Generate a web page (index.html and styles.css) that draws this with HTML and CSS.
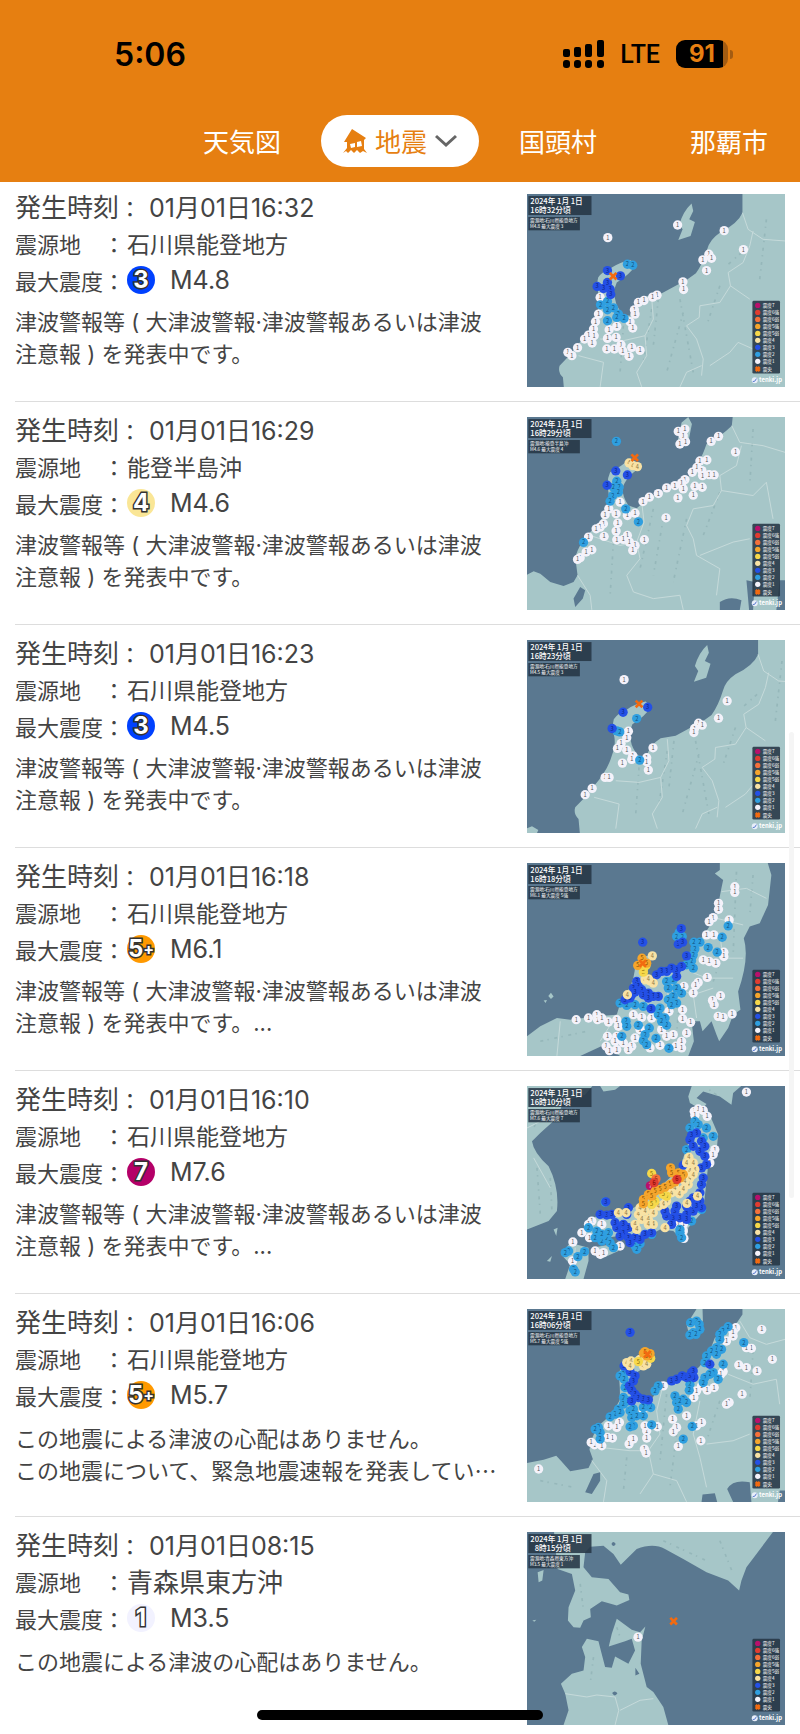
FILE: index.html
```
<!DOCTYPE html>
<html lang="ja">

<head>
	<meta charset="UTF-8">
	<meta name="viewport" content="width=device-width, initial-scale=1.0">
	<title>地震情報</title>
	<link rel="stylesheet" href="styles.css">
</head>

<body>
	<header class="header">
		<div class="status-bar">
			<span class="clock">5:06</span>
			<div class="status-icons">
				<svg class="signal" viewBox="0 0 41 28" aria-hidden="true">
					<rect x="0" y="9" width="7" height="8" rx="2" />
					<rect x="11" y="7" width="7" height="10" rx="2" />
					<rect x="22" y="4" width="7" height="13" rx="2" />
					<rect x="34" y="0" width="7" height="17" rx="2" />
					<rect x="0" y="20" width="7" height="8" rx="3" />
					<rect x="11" y="20" width="7" height="8" rx="3" />
					<rect x="22" y="20" width="7" height="8" rx="3" />
					<rect x="34" y="20" width="7" height="8" rx="3" />
				</svg>
				<span class="network">LTE</span>
				<span class="battery">91</span>
			</div>
		</div>
		<nav class="tabs">
			<a class="tab" href="#chart">天気図</a>
			<button class="tab tab-active" type="button">
				<svg class="house" viewBox="0 0 24 26" aria-hidden="true">
					<path d="M9 1 L23 10 L21 12 L21 21 L24 25 L20 23 L17 25 L14 22 L11 25 L8 22 L5 25 L3 23 L0 25 L4 20 L4 14 L1 14 Z" />
					<path class="pane" d="M7 16 L12 15 L12 19 L8 20 Z M14 14 L18 13 L19 18 L14 19 Z" />
				</svg>
				地震
				<svg class="chevron" viewBox="0 0 22 14" aria-hidden="true">
					<path d="M1 2 L11 11 L21 2" />
				</svg>
			</button>
			<a class="tab" href="#kunigami">国頭村</a>
			<a class="tab tab-far" href="#naha">那覇市</a>
		</nav>
	</header>

	<ul class="quakes">
		<li class="quake">
			<div class="info">
				<dl class="facts">
					<div class="fact time"><dt>発生時刻<span>：</span></dt><dd>01月01日16:32</dd></div>
					<div class="fact"><dt>震源地　：</dt><dd>石川県能登地方</dd></div>
					<div class="fact"><dt>最大震度：</dt><dd class="scale"><span class="badge level3">3</span>M4.8</dd></div>
				</dl>
				<p class="note">津波警報等 ( 大津波警報·津波警報あるいは津波注意報 ) を発表中です。</p>
			</div>
			<svg class="map" data-map="m1632" viewBox="20 24 776 580"></svg>
		</li>
		<li class="quake">
			<div class="info">
				<dl class="facts">
					<div class="fact time"><dt>発生時刻<span>：</span></dt><dd>01月01日16:29</dd></div>
					<div class="fact"><dt>震源地　：</dt><dd>能登半島沖</dd></div>
					<div class="fact"><dt>最大震度：</dt><dd class="scale"><span class="badge level4">4</span>M4.6</dd></div>
				</dl>
				<p class="note">津波警報等 ( 大津波警報·津波警報あるいは津波注意報 ) を発表中です。</p>
			</div>
			<svg class="map" data-map="m1629" viewBox="20 24 776 580"></svg>
		</li>
		<li class="quake">
			<div class="info">
				<dl class="facts">
					<div class="fact time"><dt>発生時刻<span>：</span></dt><dd>01月01日16:23</dd></div>
					<div class="fact"><dt>震源地　：</dt><dd>石川県能登地方</dd></div>
					<div class="fact"><dt>最大震度：</dt><dd class="scale"><span class="badge level3">3</span>M4.5</dd></div>
				</dl>
				<p class="note">津波警報等 ( 大津波警報·津波警報あるいは津波注意報 ) を発表中です。</p>
			</div>
			<svg class="map" data-map="m1623" viewBox="20 24 776 580"></svg>
		</li>
		<li class="quake">
			<div class="info">
				<dl class="facts">
					<div class="fact time"><dt>発生時刻<span>：</span></dt><dd>01月01日16:18</dd></div>
					<div class="fact"><dt>震源地　：</dt><dd>石川県能登地方</dd></div>
					<div class="fact"><dt>最大震度：</dt><dd class="scale"><span class="badge level5">5<small>+</small></span>M6.1</dd></div>
				</dl>
				<p class="note">津波警報等 ( 大津波警報·津波警報あるいは津波注意報 ) を発表中です。...</p>
			</div>
			<svg class="map" data-map="m1618" viewBox="20 24 776 580"></svg>
		</li>
		<li class="quake">
			<div class="info">
				<dl class="facts">
					<div class="fact time"><dt>発生時刻<span>：</span></dt><dd>01月01日16:10</dd></div>
					<div class="fact"><dt>震源地　：</dt><dd>石川県能登地方</dd></div>
					<div class="fact"><dt>最大震度：</dt><dd class="scale"><span class="badge level7">7</span>M7.6</dd></div>
				</dl>
				<p class="note">津波警報等 ( 大津波警報·津波警報あるいは津波注意報 ) を発表中です。...</p>
			</div>
			<svg class="map" data-map="m1610" viewBox="20 24 776 580"></svg>
		</li>
		<li class="quake">
			<div class="info">
				<dl class="facts">
					<div class="fact time"><dt>発生時刻<span>：</span></dt><dd>01月01日16:06</dd></div>
					<div class="fact"><dt>震源地　：</dt><dd>石川県能登地方</dd></div>
					<div class="fact"><dt>最大震度：</dt><dd class="scale"><span class="badge level5">5<small>+</small></span>M5.7</dd></div>
				</dl>
				<p class="note kana">この地震による津波の心配はありません。<br>この地震について、緊急地震速報を発表してい…</p>
			</div>
			<svg class="map" data-map="m1606" viewBox="20 24 776 580"></svg>
		</li>
		<li class="quake">
			<div class="info">
				<dl class="facts">
					<div class="fact time"><dt>発生時刻<span>：</span></dt><dd>01月01日08:15</dd></div>
					<div class="fact"><dt>震源地　：</dt><dd class="wide">青森県東方沖</dd></div>
					<div class="fact"><dt>最大震度：</dt><dd class="scale"><span class="badge level1">1</span>M3.5</dd></div>
				</dl>
				<p class="note kana">この地震による津波の心配はありません。</p>
			</div>
			<svg class="map" data-map="m0815" viewBox="20 24 776 580"></svg>
		</li>
	</ul>

	<div class="scroll-thumb"></div>
	<div class="home-bar"></div>

	<script src="maps.js"></script>
</body>

</html>
```
FILE: styles.css
```
* {
	box-sizing: border-box;
}

body {
	margin: 0;
	background-color: #fff;
	color: #444;
	font-family: Inter, "Noto Sans CJK JP", sans-serif;
	font-size: 22px;
}

/* header */
.header {
	background-color: #e67f11;
	color: #fff;
}

.status-bar {
	display: flex;
	justify-content: space-between;
	align-items: center;
	height: 108px;
	padding: 0 72px 0 114px;
	color: #000;
}

.clock {
	font-size: 32px;
	font-weight: 600;
}

.status-icons {
	display: flex;
	align-items: center;
	gap: 16px;
}

.signal {
	width: 41px;
	height: 28px;
}

.network {
	font-family: Roboto, sans-serif;
	font-size: 25px;
	font-weight: 500;
}

.battery {
	position: relative;
	width: 52px;
	height: 28px;
	border-radius: 9px;
	background: linear-gradient(to right, #000 47px, #a45c12 47px);
	color: #e67f11;
	font-size: 24px;
	font-weight: 700;
	line-height: 28px;
	text-align: center;
}

.battery::after {
	content: "";
	position: absolute;
	top: 10px;
	left: 54px;
	width: 3px;
	height: 9px;
	border-radius: 0 3px 3px 0;
	background-color: #a45c12;
}

.tabs {
	display: flex;
	justify-content: flex-end;
	align-items: center;
	gap: 40px;
	padding: 7px 32px 15px;
}

.tab {
	color: #fff;
	font-family: "Noto Sans CJK JP", sans-serif;
	font-size: 26px;
	line-height: 52px;
	text-decoration: none;
	white-space: nowrap;
}

.tab-far {
	margin-left: 53px;
}

.tab-active {
	display: flex;
	align-items: center;
	gap: 8px;
	height: 52px;
	padding: 0 22px;
	border: none;
	border-radius: 26px;
	background-color: #fff;
	color: #e67f11;
	cursor: pointer;
}

.house {
	width: 24px;
	height: 26px;
	fill: #e67f11;
}

.house .pane {
	fill: #fff;
}

.chevron {
	width: 22px;
	height: 14px;
	fill: none;
	stroke: #666;
	stroke-width: 3;
}

/* list */
.quakes {
	margin: 0;
	padding: 0;
	list-style: none;
}

.quake {
	display: grid;
	grid-template-columns: minmax(0, 1fr) 258px;
	gap: 14px;
	margin-left: 15px;
	padding: 8px 15px 14px 0;
	border-top: 1px solid #ddd;
}

.quake:first-child {
	padding-top: 5px;
	border-top: none;
}

.quake:last-child {
	padding-bottom: 9px;
}

.facts {
	margin: 0;
}

.fact {
	display: flex;
	align-items: center;
	height: 37px;
}

.fact dt {
	width: 112px;
	white-space: nowrap;
}

.fact dd {
	display: flex;
	align-items: center;
	margin: 0;
	font-size: 23px;
}

.fact .wide {
	font-size: 26px;
}

.fact .scale,
.time dd {
	font-size: 25px;
}

.time dt {
	width: 134px;
	font-size: 26px;
}

.time dt span {
	font-size: 22px;
}

.badge {
	display: flex;
	justify-content: center;
	align-items: center;
	width: 28px;
	height: 28px;
	margin-right: 15px;
	border-radius: 50%;
	color: #fff;
	font-size: 24px;
	font-weight: 700;
	line-height: 28px;
	-webkit-text-stroke: 3px #333;
	paint-order: stroke fill;
}

.badge small {
	font-size: 16px;
}

.level1 {
	background-color: #f2f2ff;
}

.level3 {
	background-color: #0041ff;
}

.level4 {
	background-color: #fae696;
}

.level5 {
	background-color: #ff9900;
}

.level7 {
	background-color: #b40068;
}

.note {
	margin: 8px 0 0;
	padding-right: 12px;
	line-height: 32px;
}

.kana {
	font-family: "Noto Sans CJK JP", sans-serif;
}

/* maps */
.map {
	display: block;
	width: 258px;
	height: 193px;
	margin-top: 7px;
	background-color: #5a7890;
	font-family: "Noto Sans CJK JP", sans-serif;
}

.map .land {
	fill: #a6c6c8;
}

.map .water {
	fill: #5a7890;
}

.map .border {
	fill: none;
	stroke: #c6dada;
	stroke-width: 3;
	stroke-linejoin: round;
}

.map .ridge {
	fill: none;
	stroke: #8fb1b3;
	stroke-width: 5;
	stroke-dasharray: 9 13 4 17;
	opacity: 0.7;
}

.map .panel {
	fill: #263644;
	opacity: 0.88;
}

.map text {
	fill: #fff;
}

.map .spot-number {
	font-size: 17px;
	text-anchor: middle;
}

.map .epicenter {
	fill: none;
	stroke: #f26a10;
	stroke-width: 8;
}

.map .date {
	font-size: 23px;
	font-weight: 500;
}

.map .detail {
	font-size: 14px;
}

.map .logo {
	font-size: 18px;
	font-weight: 700;
}

/* overlays */
.scroll-thumb {
	position: absolute;
	top: 732px;
	right: 6px;
	width: 5px;
	height: 466px;
	border-radius: 3px;
	background-color: #f5f5f5;
}

.home-bar {
	position: fixed;
	bottom: 14px;
	left: calc(50% - 143px);
	width: 286px;
	height: 10px;
	border-radius: 5px;
	background-color: #000;
}
```
FILE: maps.js
```
// fill and digit colour of each intensity
const levels = {
	'1': ['#f4f2fa', '#555'],
	'2': ['#2f9fe0', '#12507c'],
	'3': ['#2450e6', '#0c1f80'],
	'4': ['#f8e2a4', '#8a7440'],
	'5-': ['#f6d84a', '#806400'],
	'5+': ['#f5a52c', '#7c4a00'],
	'6-': ['#f4703a', '#7a2000'],
	'6+': ['#e03c30', '#700'],
	'7': ['#b8106c', '#fff']
};

const legend = [
	['7', '震度7'], ['6+', '震度6強'], ['6-', '震度6弱'], ['5+', '震度5強'], ['5-', '震度5弱'],
	['4', '震度4'], ['3', '震度3'], ['2', '震度2'], ['1', '震度1']
];

const chubuCoast = 'M668 10 V80 Q655 112 600 140 Q570 160 562 190 Q548 235 528 262 Q500 285 470 298 L420 325 L375 332 Q345 350 330 390 L312 388 Q295 372 288 352 L280 318 L290 290 Q330 265 347 237 L330 222 Q300 228 275 245 Q245 258 234 275 Q228 300 236 330 Q240 360 228 385 Q215 430 175 475 Q150 510 118 540 Q112 560 128 575 L134 640 H900 V10 Z M515 52 L520 75 L508 100 L525 108 L512 150 L475 162 L488 130 L478 115 Q490 75 515 52 Z';
const chubuBorders = 'M668 80 L685 130 L730 160 L796 165 M700 135 L690 180 L670 230 L625 260 L632 300 L600 350 L540 360 L538 395 L500 420 L530 460 L550 520 L545 570 M395 335 L400 400 L375 450 L380 510 L350 560 L365 604 M240 460 L310 465 L375 450 M632 300 L690 340 M570 540 L630 500 L655 470 L700 490 M175 510 L250 530 L240 604 M545 540 L500 560 L480 604';
const chubuRidges = 'M395 370 L370 530 M415 340 L400 480 M490 380 L440 560 M740 100 L720 280 M600 300 L560 420 M310 420 L300 560 M665 200 L620 240 M480 340 L520 560';

const maps = {
	m1632: {
		time: '16時32分頃', place: '石川県能登地方', detail: 'M4.8 最大震度 3',
		land: chubuCoast, borders: chubuBorders, ridges: chubuRidges,
		epicenter: [279, 271],
		spots: {
			'1': '263,155 473,117 613,134 671,191 567,205 549,222 575,217 560,254 489,288 491,311 411,328 398,334 372,344 355,350 343,372 240,335 235,385 226,408 220,430 222,450 205,448 193,460 216,472 172,486 143,500 155,510 330,408 338,427 290,422 267,432 262,458 288,455 260,490 283,490 303,477 308,495 335,485 327,512 360,494 345,385',
			'2': '322,235 338,238 241,357 262,347 262,372 280,366 262,405 295,385 312,398 290,395',
			'3': '262,254 301,270 262,290 231,302 250,308 270,310 272,326'
		}
	},
	m1629: {
		time: '16時29分頃', place: '能登半島沖', detail: 'M4.6 最大震度 4',
		land: 'M640 10 L636 50 Q600 85 560 105 Q545 150 520 190 Q490 225 440 240 L395 262 Q370 280 350 298 L325 290 Q305 260 308 235 Q315 215 335 195 Q355 180 362 165 L330 150 Q300 175 270 190 Q258 215 265 250 Q270 280 262 300 Q245 340 205 375 Q180 400 165 445 L172 500 L160 520 L130 532 L90 520 L60 495 L40 488 L20 498 V604 H796 V10 Z M505 24 L516 45 L505 100 L470 110 L485 40 Z',
		water: 'M600 580 Q630 560 665 575 L660 604 H600 Z M680 515 L705 520 L700 604 H688 Z M780 515 H796 V604 H770 Z M165 595 L160 570 L180 535 L195 545 L188 570 Z',
		borders: 'M636 50 L660 100 L730 110 L796 130 M665 110 L650 170 L600 200 L605 245 L580 290 L520 300 L500 350 L520 390 L530 440 L600 480 L590 560 M365 280 L372 340 L350 400 L360 450 L320 500 L340 550 M210 380 L300 410 L350 400 M605 245 L700 260 L740 220 L760 330 M540 440 L640 400 L690 390 M172 500 L210 560 L215 604 M340 550 L400 570 L480 560 L490 604',
		ridges: 'M400 300 L360 480 M430 330 L400 500 M700 60 L690 230 M600 250 L550 380 M500 330 L460 520 M280 400 L270 560',
		epicenter: [344, 146],
		spots: {
			'1': '475,67 495,60 490,80 480,105 497,98 574,97 596,82 647,129 540,156 561,153 531,175 517,190 546,185 548,200 568,197 583,198 525,232 547,235 520,259 495,212 485,222 465,230 474,267 490,240 440,237 415,254 388,265 369,278 438,327 300,280 266,300 255,318 288,315 250,345 293,343 240,355 228,360 288,367 252,383 205,385 290,393 322,380 328,400 310,392 373,393 345,410 338,425 215,423 198,430 180,447 172,452 345,313 322,320',
			'2': '289,97 290,217 280,235 297,235 295,250 278,260 270,277 317,300 355,339 190,401',
			'3': '287,186 322,198 261,229',
			'4': '327,162 338,170 352,173'
		}
	},
	m1623: {
		time: '16時23分頃', place: '石川県能登地方', detail: 'M4.5 最大震度 3',
		land: chubuCoast, borders: chubuBorders, ridges: chubuRidges, shift: [47, -13],
		extra: 'M20 590 L35 584 L54 595 L50 604 H20 Z',
		epicenter: [357, 216],
		spots: {
			'1': '312,143 622,207 596,259 536,274 547,280 524,290 522,302 399,348 325,298 320,318 303,335 292,350 320,355 338,372 335,383 380,378 380,390 385,415 307,394 255,437 267,437 216,470 195,489',
			'2': '350,260 290,297 299,300 359,385',
			'3': '309,241 383,226 276,290'
		}
	},
	m1618: {
		time: '16時18分頃', place: '石川県能登地方', detail: 'M6.1 最大震度 5強',
		land: 'M600 10 V45 L585 55 L610 75 Q600 120 590 180 Q560 230 540 255 Q520 300 480 340 Q440 360 400 365 L410 395 L385 390 Q365 370 362 350 L385 330 L400 300 L372 305 L345 330 Q345 370 325 405 Q300 440 290 480 L230 485 L150 495 L110 490 L60 515 L20 545 V604 H180 L250 572 L300 604 H505 L522 560 L515 500 L540 500 L548 530 L575 500 L590 540 L598 560 L625 520 L640 480 L662 465 L655 410 Q690 310 672 250 L690 215 L720 205 L745 150 L755 60 L740 10 Z M478 230 L492 225 L495 265 L468 272 Z M70 437 L80 436 L76 445 Z M84 424 L92 414 L100 425 L92 433 Z',
		borders: 'M605 110 L680 100 L740 130 M590 190 L670 210 M600 240 L610 310 L670 310 M510 350 L560 370 L640 370 M470 400 L520 420 L580 400 M440 380 L450 480 L420 540 M120 500 L110 604 M290 480 L240 560 M520 420 L530 490',
		ridges: 'M650 50 L640 300 M700 60 L690 180 M610 290 L580 380 M480 410 L470 540 M60 560 L200 530',
		epicenter: [368, 326],
		spots: {
			'1': '645,95 645,112 596,145 596,163 580,188 568,200 628,195 560,240 582,240 612,292 612,305 550,315 568,320 588,325 562,368 535,383 527,392 520,415 492,395 602,423 578,437 583,450 595,485 610,488 637,478 488,465 488,492 512,503 447,470 205,490 168,495 230,480 232,495 245,490 265,502 290,495 295,515 340,480 365,488 395,490 262,545 290,545 285,560 258,575 290,585 310,565 335,575 345,550 360,525 425,525 460,540 500,535 485,560 390,580 420,572 468,575 485,580 440,545 268,588 325,585',
			'2': '478,232 470,245 487,245 625,213 607,247 540,262 522,262 525,282 565,278 592,292 520,300 515,318 520,340 500,330 440,380 460,375 445,400 470,400 485,415 460,425 445,435 470,445 300,445 320,452 345,450 370,455 395,462 420,460 415,480 435,490 440,512 425,500 318,500 320,515 355,512 388,520 305,545 375,540 370,558 380,570 408,551 447,581 455,450',
			'3': '368,262 484,221 475,268 488,262 500,303 485,335 470,345 455,340 440,350 425,350 410,360 470,365 350,380 355,395 340,400 335,420 345,412 365,405 370,420 385,415 400,425 415,425 315,435 330,430 393,462 385,430',
			'4': '397,303 375,375 388,378 400,385 322,420 385,372',
			'5-': '370,352 370,342 378,332',
			'5+': '366,310 353,332 380,325'
		}
	},
	m1610: {
		time: '16時10分頃', place: '石川県能登地方', detail: 'M7.6 最大震度 7',
		land: 'M20 10 H228 L195 50 L130 70 L110 120 L60 165 L35 190 Q40 225 85 265 Q118 330 110 400 L85 430 L20 455 Z M240 24 H300 L285 35 L250 40 Z M520 10 L505 55 L510 75 L545 95 L560 78 L530 60 L550 40 L600 55 L635 80 L640 45 L680 10 Z M515 90 L520 150 L500 210 L480 270 L450 300 L400 345 L360 380 L330 395 L240 405 L200 440 L195 470 L260 480 L330 470 L350 500 L385 475 L420 455 L460 460 L480 480 L500 485 L505 450 L550 400 L560 310 L565 260 L590 220 L595 170 L565 100 L545 90 Z M150 495 L205 510 L205 550 L190 604 H135 L150 560 L122 530 Z M215 510 L300 495 L295 520 L240 545 Z M100 455 L112 450 L108 475 Z M80 550 L95 535 L90 552 Z',
		borders: 'M20 150 L80 120 M40 240 L90 330 M150 40 L100 90 M165 510 L160 590',
		ridges: 'M50 270 L60 410 M80 60 L40 150 M590 50 L560 30 M90 300 L95 400',
		epicenter: null,
		spots: {
			'1': '523,100 535,93 550,97 562,115 525,112 585,215 580,230 570,255 215,430 205,440 185,465 208,480 245,440 158,493 157,550 225,520 240,530 250,525 300,505 490,440 475,440 492,482 680,42 490,460',
			'2': '525,130 535,140 510,150 560,150 580,175 550,180 500,215 255,373 205,450 230,460 225,480 245,490 260,480 270,495 280,510 245,470 145,520 135,525 193,522 173,537 160,575 165,583 345,505 360,498 350,515 395,470 480,465 485,480 515,430 545,395 480,455 265,465',
			'3': '257,372 530,165 510,185 515,172 545,190 520,205 555,205 540,220 555,235 560,260 545,270 550,300 545,320 540,345 520,360 540,370 545,390 520,400 500,410 480,420 460,420 440,415 435,400 465,400 500,385 510,370 530,385 240,410 260,412 275,410 325,390 320,410 290,450 285,435 310,440 325,450 310,465 325,480 345,480 360,485 375,470 395,465 330,495 300,475 500,425 455,440 470,385 490,262',
			'4': '507,238 500,255 520,255 525,275 510,280 510,300 520,290 505,320 495,310 490,335 478,348 455,345 465,330 533,355 501,377 440,370 430,380 415,385 400,405 375,400 355,410 345,440 350,455 365,425 385,425 400,440 385,440 295,405 318,405 435,450 360,390',
			'5-': '395,287 405,370 395,380 440,355 430,350',
			'5+': '452,270 455,285 475,285 490,290 480,300 450,320 435,328 420,335 405,340 385,350 370,365 395,355 370,378 465,312',
			'6-': '408,303',
			'6+': '471,305 402,315',
			'7': '391,324'
		}
	},
	m1606: {
		time: '16時06分頃', place: '石川県能登地方', detail: 'M5.7 最大震度 5強',
		land: 'M668 10 V40 Q640 90 585 110 Q560 180 530 205 Q490 235 440 243 Q410 265 395 295 L360 292 Q335 265 342 240 L350 215 L395 185 L402 160 L370 155 L320 182 L295 215 Q302 270 298 300 Q275 345 235 375 Q210 415 208 447 L218 475 L205 502 L150 512 L122 480 L108 465 L70 477 L20 487 V604 H796 V10 Z M530 24 H548 L550 90 L510 110 L500 70 Z',
		water: 'M545 604 L548 582 L585 578 L592 604 Z M622 565 Q640 535 690 545 L695 604 H640 Z M780 570 H796 V604 H775 Z M195 575 L220 520 L240 515 L240 540 L215 580 Z',
		borders: 'M660 60 L690 110 L740 130 L796 115 M625 220 L700 250 L770 235 L780 310 M430 250 L410 330 L420 400 L385 450 L400 520 L360 580 M540 300 L520 400 L540 470 L560 560 M560 430 L640 420 L690 400 M240 440 L330 450 L385 450 M215 480 L260 540 L250 604 M400 520 L470 540 L500 604',
		ridges: 'M440 280 L420 480 M700 150 L690 300 M600 300 L560 420 M470 400 L450 560 M60 540 L160 560 M320 470 L310 570',
		epicenter: [382, 160],
		spots: {
			'1': '726,85 758,175 648,80 640,105 620,120 640,92 695,142 680,140 657,192 680,200 712,210 610,212 603,220 667,280 628,305 620,310 583,260 562,268 545,255 530,270 522,290 430,255 55,505 298,365 290,380 265,375 277,412 262,410 245,435 223,432 213,425 458,355 500,345 545,365 530,375 470,380 460,393 380,390 375,375 412,378 335,415 327,430 380,412 373,445 378,457 475,437 543,420 368,340 340,415',
			'2': '512,65 530,60 538,70 540,85 520,95 510,102 528,100 625,77 610,90 600,100 600,115 672,125 590,140 575,150 605,145 590,160 560,165 555,185 610,190 580,215 595,235 570,220 555,230 550,245 510,250 508,268 415,255 405,270 465,285 470,305 490,295 500,305 475,325 310,220 300,225 312,235 315,260 310,290 310,310 325,300 295,325 285,340 270,348 300,335 330,330 340,325 335,350 350,345 340,375 330,378 392,320 380,310 370,320 395,372 517,377 490,415 235,380 240,395 225,385 240,415 370,345 480,300',
			'3': '330,94 312,195 330,212 345,225 340,240 328,255 335,268 345,280 355,290 335,300 370,295 385,297 455,240 470,235 487,225 500,230 515,215 522,230 510,225 570,190 520,210',
			'4': '320,185 333,180 330,195 360,175 375,180 370,195 380,190',
			'5-': '355,182 392,172',
			'5+': '370,157 390,158 380,165 375,152'
		}
	},
	m0815: {
		time: '8時15分頃', place: '青森県東方沖', detail: 'M3.5 最大震度 1',
		land: 'M100 10 L112 135 L155 150 L165 200 L145 250 L143 290 L160 310 L180 312 L190 290 L212 280 L210 255 L245 232 L290 245 L328 228 L325 212 L300 205 L265 165 L215 160 L190 130 L195 85 L210 68 L250 65 L280 90 L302 122 L350 75 Q400 55 435 75 L490 105 L560 145 L625 170 L658 200 L665 170 L680 130 L770 10 Z M290 285 L335 318 L360 325 L376 308 L365 350 L362 420 L380 490 L400 505 L430 550 L445 604 H130 L145 560 L135 510 L122 480 L155 450 L190 440 L195 400 L185 370 L200 345 L235 352 L242 380 L255 430 L275 432 L285 398 L325 420 L345 380 L335 345 L315 352 L266 368 L275 330 Z M52 145 L70 138 L66 170 L55 175 Z M36 290 L48 288 L42 294 Z',
		water: 'M274 60 Q279 48 287 60 Q280 72 274 60 Z M276 508 Q284 498 292 509 Q284 522 276 508 Z M346 432 L358 450 L346 455 Z',
		borders: 'M135 510 L200 520 L230 514 L285 520 L296 560 L285 604 M300 560 L360 530 L400 525',
		ridges: 'M180 180 L190 260 M220 400 L210 480 M600 50 L640 150 M430 50 L560 110 M290 310 L300 340',
		epicenter: [461, 292],
		spots: { '1': '354,340' }
	}
};

function spot(x, y, level) {
	const [fill, ink] = levels[level];
	return `<circle cx="${x}" cy="${y}" r="14" fill="${fill}" />
		<text class="spot-number" x="${x}" y="${Number(y) + 6}" style="fill:${ink}">${level[0]}</text>`;
}

function cross([x, y], size) {
	return `<path class="epicenter" d="M${x - size} ${y - size} L${x + size} ${y + size} M${x + size} ${y - size} L${x - size} ${y + size}" />`;
}

function drawMap(map) {
	const [dx, dy] = map.shift || [0, 0];
	let out = `<g transform="translate(${dx} ${dy})">
		<path class="land" d="${map.land}" />
		<path class="ridge" d="${map.ridges}" />
		<path class="border" d="${map.borders}" />
	</g>`;
	if (map.extra) out += `<path class="land" d="${map.extra}" />`;
	if (map.water) out += `<path class="water" d="${map.water}" />`;

	for (const level of Object.keys(levels)) {
		if (!map.spots[level]) continue;
		for (const point of map.spots[level].split(' ')) {
			const [x, y] = point.split(',');
			out += spot(x, y, level);
		}
	}
	if (map.epicenter) out += cross(map.epicenter, 10);

	// date and source
	out += `<rect class="panel" x="24" y="30" width="190" height="57" />
		<text class="date" x="30" y="53">2024年 1月 1日</text>
		<text class="date" x="${map.time[0] === '8' ? 43 : 30}" y="80">${map.time}</text>
		<rect class="panel" x="24" y="93" width="155" height="40" />
		<text class="detail" x="29" y="109">震源地:${map.place}</text>
		<text class="detail" x="29" y="127">${map.detail}</text>`;

	// legend
	out += '<rect class="panel" x="698" y="345" width="83" height="219" rx="4" />';
	legend.forEach(([level, label], i) => {
		const y = 359 + i * 21;
		out += `<circle cx="714" cy="${y}" r="8" fill="${levels[level][0]}" />
			<text class="detail" x="729" y="${y + 5}">${label}</text>`;
	});
	out += cross([714, 550], 6) + '<text class="detail" x="729" y="555">震央</text>';
	out += `<circle cx="705" cy="584" r="9" fill="#e8eefa" />
		<path d="M699 588 Q706 590 710 579" fill="none" stroke="#5a7bd0" stroke-width="3" />
		<text class="logo" x="718" y="590">tenki.jp</text>`;
	return out;
}

document.querySelectorAll('.map').forEach(el => {
	el.innerHTML = drawMap(maps[el.dataset.map]);
});
```
